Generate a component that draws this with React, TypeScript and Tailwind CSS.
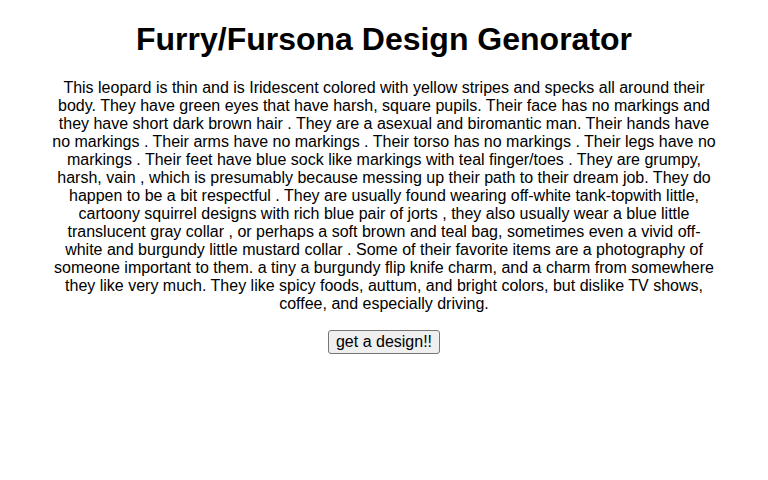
export default function App() {
  return (
    <div className="min-h-[480px] bg-white text-black px-2 pt-[21px] text-center" style={{ fontFamily: '"Liberation Sans", Arial, sans-serif' }}>
      <h1 className="text-[32px] leading-[37px] font-bold">Furry/Fursona Design Genorator</h1>
      <p className="mx-auto mt-[21px] w-[666px] text-[16px] leading-[18px]">
        This leopard is thin and is Iridescent colored with yellow stripes and specks all around their body. They have green eyes that have harsh, square pupils. Their face has no markings and they have short dark brown hair . They are a asexual and biromantic man. Their hands have no markings . Their arms have no markings . Their torso has no markings . Their legs have no markings . Their feet have blue sock like markings with teal finger/toes . They are grumpy, harsh, vain , which is presumably because messing up their path to their dream job. They do happen to be a bit respectful . They are usually found wearing off-white tank-topwith little, cartoony squirrel designs with rich blue pair of jorts , they also usually wear a blue little translucent gray collar , or perhaps a soft brown and teal bag, sometimes even a vivid off-white and burgundy little mustard collar . Some of their favorite items are a photography of someone important to them. a tiny a burgundy flip knife charm, and a charm from somewhere they like very much. They like spicy foods, auttum, and bright colors, but dislike TV shows, coffee, and especially driving.
      </p>
      <div className="mt-[17px]">
        <button className="px-[7px] py-[2px] border border-[#767676] rounded-[3px] bg-[#efefef] text-[16px] leading-[18px] text-black">get a design!!</button>
      </div>
    </div>
  );
}
